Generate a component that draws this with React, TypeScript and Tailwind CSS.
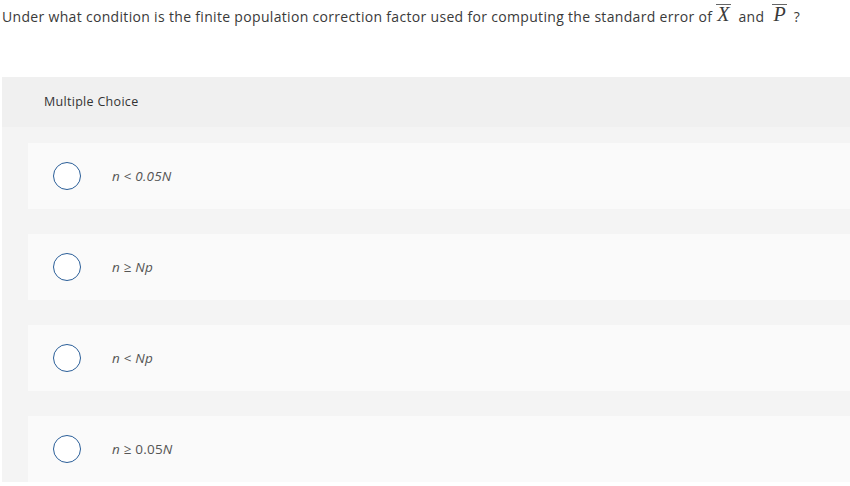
import React from "react";

const options = [
  <><i>n</i> &lt; <i>0.05N</i></>,
  <><i>n</i>&nbsp;≥ <i>Np</i></>,
  <><i>n</i> &lt; <i>Np</i></>,
  <><i>n</i>&nbsp;≥ 0.05<i>N</i></>,
];

function Bar({ children }: { children: React.ReactNode }) {
  return (
    <span className="inline-block border-t border-[#666] leading-[16px] pt-[1px] px-[1px]" style={{ fontFamily: "'Liberation Serif', serif" }}>
      <i className="text-[20px] tracking-normal">{children}</i>
    </span>
  );
}

export default function App() {
  return (
    <div className="w-[850px] h-[486px] bg-white overflow-hidden text-[#3a3a3a]" style={{ fontFamily: "'Open Sans', sans-serif" }}>
      <div className="pl-[2px] pt-[4px] h-[77px] text-[14px] leading-[20px] tracking-[0.32px] flex items-start">
        <span className="mt-[3px]">Under what condition is the finite population correction factor used for computing the standard error of&nbsp;</span>
        <Bar>X</Bar>
        <span className="mt-[3px] ml-[8px] mr-[8px]">and</span>
        <Bar>P</Bar>
        <span className="mt-[3px] ml-[7px]">?</span>
      </div>
      <div className="ml-[2px] bg-[#f4f4f4]">
        <div className="h-[50px] bg-[#f0f0f0] flex items-center pl-[42px] text-[12.5px] tracking-[0.3px] text-[#333]">
          Multiple Choice
        </div>
        <div className="pt-[16px] pl-[26px] flex flex-col gap-[25px]">
          {options.map((o, i) => (
            <div key={i} className="h-[66px] bg-[#fafafa] flex items-center">
              <div className="ml-[25px] w-[28px] h-[28px] rounded-full border-[1.5px] border-[#2a5e98] bg-white" />
              <div className="ml-[31px] text-[13.5px] tracking-[0.2px] text-[#555]">{o}</div>
            </div>
          ))}
        </div>
      </div>
    </div>
  );
}
